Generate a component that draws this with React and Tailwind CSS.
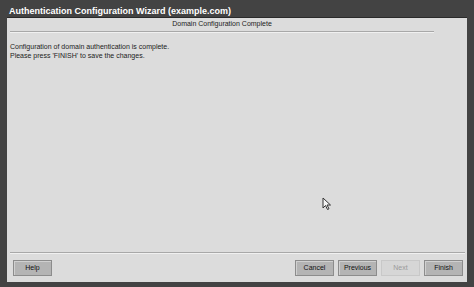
import React from "react";

const Button = ({ label, disabled }) => (
  <button
    className={
      disabled
        ? "h-[16px] w-[39px] border border-[#c8c8c8] bg-[#d6d6d6] text-[7px] text-[#9a9a9a]"
        : "h-[16px] w-[39px] border border-[#8c8c8c] bg-[#b4b4b4] text-[7px] text-[#111] shadow-[inset_1px_1px_0_#d0d0d0]"
    }
  >
    {label}
  </button>
);

const App = () => {
  return (
    <div
      className="relative w-[474px] h-[287px] bg-[#434343] flex flex-col overflow-hidden"
      style={{ fontFamily: "'Liberation Sans', Arial, sans-serif" }}
    >
      {/* title bar */}
      <div className="h-[17px] pl-[9px] pt-[5px] text-[9px] leading-[12px] font-bold text-white">
        Authentication Configuration Wizard (example.com)
      </div>

      {/* panel */}
      <div className="mx-[7px] flex-1 mb-[5px] bg-[#dcdcdc] border-t border-[#2a2a2a] flex flex-col">
        <div className="h-[13px] flex items-center justify-center pr-[30px] text-[7px] text-[#222]">
          Domain Configuration Complete
        </div>
        <div className="ml-[3px] mr-[33px] h-[2px] border-t border-[#a8a8a8] border-b border-b-[#f0f0f0]" />
        <div className="pl-[3px] pt-[9px] text-[7px] leading-[9px] text-[#222]">
          <p>Configuration of domain authentication is complete.</p>
          <p>Please press 'FINISH' to save the changes.</p>
        </div>

        <div className="flex-1" />

        <div className="ml-[3px] mr-[2px] h-[2px] border-t border-[#a8a8a8] border-b border-b-[#f0f0f0]" />
        <div className="h-[28px] flex items-center pl-[6px] pr-[4px]">
          <Button label="Help" />
          <div className="flex-1" />
          <div className="flex gap-[4px]">
            <Button label="Cancel" />
            <Button label="Previous" />
            <Button label="Next" disabled />
            <Button label="Finish" />
          </div>
        </div>
      </div>

      {/* mouse pointer */}
      <svg
        className="absolute left-[322px] top-[197px]"
        width="10"
        height="14"
        viewBox="0 0 10 14"
      >
        <path
          d="M1 1 L1 11 L3.5 8.5 L5.5 12.5 L7 11.8 L5 8 L8.5 8 Z"
          fill="#f4f4f4"
          stroke="#333"
          strokeWidth="1"
          strokeLinejoin="round"
        />
      </svg>
    </div>
  );
};

export default App;
